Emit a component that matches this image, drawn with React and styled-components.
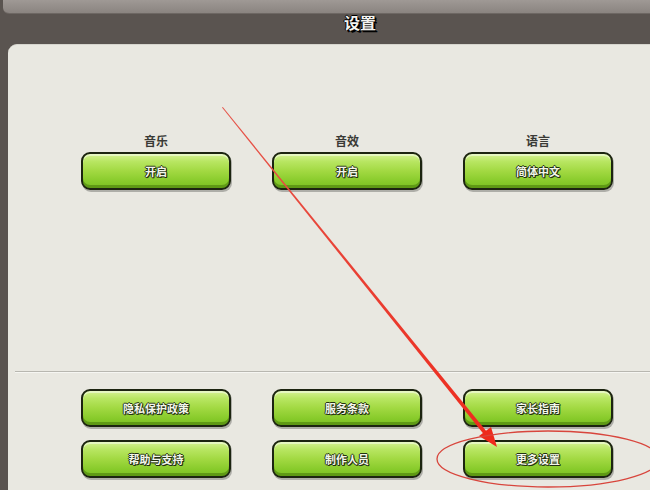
import React from "react";
import styled, { createGlobalStyle } from "styled-components";

const Global = createGlobalStyle`
  html, body { margin: 0; padding: 0; background: #5a5450; }
  body { font-family: "Noto Sans CJK SC", "Noto Sans", sans-serif; }
`;

const Screen = styled.div`
  position: relative;
  width: 650px;
  height: 490px;
  overflow: hidden;
  background: #5a5450;
  display: flex;
  flex-direction: column;
`;

const TopStrip = styled.div`
  height: 13px;
  margin-left: 3px;
  border-bottom-left-radius: 6px;
  background: linear-gradient(#9f9995, #8a8480);
  border-bottom: 1px solid #6d6763;
`;

const Header = styled.div`
  height: 30px;
  display: flex;
  align-items: flex-start;
  justify-content: center;
  padding-left: 70px;
`;

const Title = styled.h1`
  margin: 0;
  font-size: 16px;
  line-height: 16px;
  padding-top: 0px;
  font-weight: 700;
  color: #f4f4f0;
  text-shadow: 1px 1px 0 #000, 2px 2px 0 #000, -1px 0 0 #000, 0 -1px 0 #000;
`;

const Panel = styled.div`
  flex: 1;
  margin-left: 8px;
  background: #e9e8e1;
  border-top-left-radius: 9px;
  border-top: 1px solid #d6d5ce;
  display: flex;
  flex-direction: column;
  padding-top: 88px;
`;

const Grid = styled.div`
  display: grid;
  grid-template-columns: repeat(3, 150px);
  column-gap: 41px;
  row-gap: ${(p) => p.$rowGap || 0}px;
  padding-left: 73px;
`;

const Cell = styled.div`
  display: flex;
  flex-direction: column;
  align-items: center;
  gap: 3px;
`;

const Label = styled.div`
  font-size: 12px;
  line-height: 16px;
  font-weight: 700;
  color: #3a3a36;
`;

const Button = styled.button`
  width: 150px;
  height: ${(p) => p.$h || 38}px;
  padding: 0;
  border: 2px solid #1c2410;
  border-radius: 9px;
  background: linear-gradient(
    #d6f294 0%,
    #b8e662 22%,
    #a2d942 50%,
    #88cb2b 80%,
    #7abf21 100%
  );
  box-shadow: inset 0 2px 0 rgba(255, 255, 255, 0.45),
    inset 0 -3px 0 rgba(70, 120, 10, 0.55), 1px 2px 0 rgba(0, 0, 0, 0.25);
  font-family: "Noto Sans CJK SC", sans-serif;
  font-size: 11px;
  font-weight: 700;
  color: #f3f6ea;
  text-shadow: 1px 1px 0 #223010, -1px 0 0 #223010, 0 -1px 0 #223010,
    1px 0 0 #223010, 0 1px 0 #223010;
  cursor: pointer;
`;

const Divider = styled.hr`
  margin: 181px 0 17px 7px;
  border: 0;
  height: 1px;
  background: #b8b7b0;
  box-shadow: 0 1px 0 #f6f6f2;
`;

const Annotation = styled.svg`
  position: absolute;
  left: 0;
  top: 0;
  pointer-events: none;
`;

const top = [
  { label: "音乐", text: "开启" },
  { label: "音效", text: "开启" },
  { label: "语言", text: "简体中文" },
];

const bottom = ["隐私保护政策", "服务条款", "家长指南", "帮助与支持", "制作人员", "更多设置"];

export default function App() {
  return (
    <>
      <Global />
      <Screen>
        <TopStrip />
        <Header>
          <Title>设置</Title>
        </Header>
        <Panel>
          <Grid>
            {top.map((t) => (
              <Cell key={t.label}>
                <Label>{t.label}</Label>
                <Button>{t.text}</Button>
              </Cell>
            ))}
          </Grid>
          <Divider />
          <Grid $rowGap={13}>
            {bottom.map((b) => (
              <Button key={b} $h={38}>
                {b}
              </Button>
            ))}
          </Grid>
        </Panel>
        <Annotation width="650" height="490" viewBox="0 0 650 490">
          <defs>
            <linearGradient id="arrowGrad" x1="222" y1="108" x2="497" y2="446" gradientUnits="userSpaceOnUse">
              <stop offset="0" stopColor="#e5554a" />
              <stop offset="1" stopColor="#ee2a1c" />
            </linearGradient>
          </defs>
          <polygon
            points="222,107.5 222.8,107 487,432 484,434.5"
            fill="url(#arrowGrad)"
          />
          <polygon points="497,447 479,436 491,427" fill="#ee2a1c" />
          <ellipse
            cx="548"
            cy="459"
            rx="111"
            ry="28"
            fill="none"
            stroke="#d8453c"
            strokeWidth="1.3"
          />
        </Annotation>
      </Screen>
    </>
  );
}
